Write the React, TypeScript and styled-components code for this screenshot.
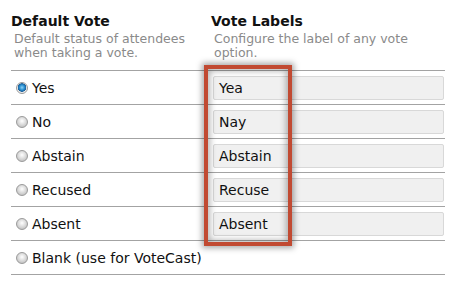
import { Fragment } from "react";
import styled, { createGlobalStyle } from "styled-components";

const GlobalStyle = createGlobalStyle`
  html, body {
    margin: 0;
    padding: 0;
    background: #ffffff;
  }
  body {
    font-family: "DejaVu Sans", Verdana, sans-serif;
  }
`;

const Page = styled.div`
  position: relative;
  width: 454px;
  height: 282px;
  padding: 0 9px 0 11px;
  box-sizing: border-box;
  overflow: hidden;
`;

const Grid = styled.div`
  display: grid;
  grid-template-columns: 200px 1fr;
`;

const HeadCell = styled.div`
  height: 71px;
  box-sizing: border-box;
  padding-top: 13px;
  border-bottom: 1px solid #a3a3a3;
`;

const Title = styled.div`
  font-size: 14px;
  font-weight: bold;
  color: #111;
  line-height: 17px;
`;

const Hint = styled.div`
  font-size: 12.5px;
  color: #8a8a8a;
  line-height: 14px;
  padding-left: 3px;
  margin-top: 2px;
`;

const Cell = styled.div`
  height: 34px;
  box-sizing: border-box;
  border-bottom: 1px solid #a3a3a3;
  display: flex;
  align-items: center;
`;

const RadioLabel = styled.label`
  display: flex;
  align-items: center;
  gap: 4px;
  padding-left: 5px;
  font-size: 14px;
  color: #111;
`;

const Radio = styled.span<{ $on?: boolean }>`
  width: 12px;
  height: 12px;
  border-radius: 50%;
  box-sizing: border-box;
  border: 1px solid #9a9a9a;
  background: ${(p) =>
    p.$on
      ? "radial-gradient(circle at 50% 45%, #8fd3f5 0, #2a8fd0 2.5px, #1a5f9a 4px, #e6e6e6 4.5px, #fafafa 6px)"
      : "radial-gradient(circle at 50% 40%, #ffffff 0, #e2e2e2 3px, #c4c4c4 6px)"};
`;

const Field = styled.div`
  margin-left: 2px;
  width: 231px;
  height: 24px;
  box-sizing: border-box;
  border: 1px solid #d8d8d8;
  border-radius: 2px;
  background: #f0f0f0;
  padding-left: 5px;
  font-size: 14px;
  line-height: 22px;
  color: #111;
`;

const Highlight = styled.div`
  position: absolute;
  left: 204px;
  top: 65px;
  width: 88px;
  height: 181px;
  box-sizing: border-box;
  border: 4px solid #c14a32;
  box-shadow: 0 0 6px 2px rgba(0, 0, 0, 0.35), inset 0 0 6px 2px rgba(0, 0, 0, 0.3);
  pointer-events: none;
`;

const rows = [
  { name: "Yes", label: "Yea", on: true },
  { name: "No", label: "Nay" },
  { name: "Abstain", label: "Abstain" },
  { name: "Recused", label: "Recuse" },
  { name: "Absent", label: "Absent" },
  { name: "Blank (use for VoteCast)" },
];

export default function App() {
  return (
    <>
      <GlobalStyle />
      <Page>
        <Grid>
          <HeadCell>
            <Title>Default Vote</Title>
            <Hint>Default status of attendees when taking a vote.</Hint>
          </HeadCell>
          <HeadCell>
            <Title>Vote Labels</Title>
            <Hint>Configure the label of any vote option.</Hint>
          </HeadCell>
          {rows.map((r) => (
            <Fragment key={r.name}>
              <Cell>
                <RadioLabel>
                  <Radio $on={r.on} />
                  {r.name}
                </RadioLabel>
              </Cell>
              <Cell>{r.label && <Field>{r.label}</Field>}</Cell>
            </Fragment>
          ))}
        </Grid>
        <Highlight />
      </Page>
    </>
  );
}
